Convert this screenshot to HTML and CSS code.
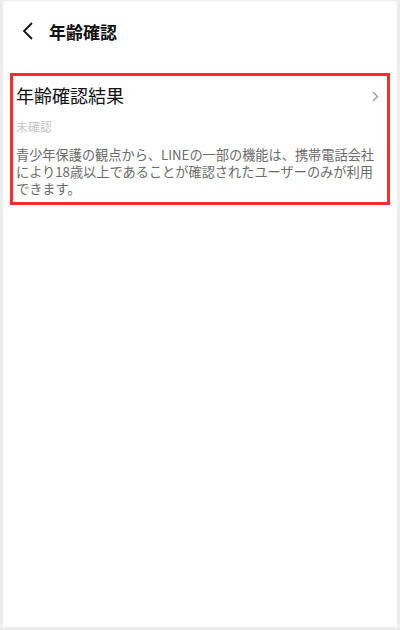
FILE: index.html
```html
<!DOCTYPE html>
<html lang="ja">
<head>
<meta charset="utf-8">
<link rel="stylesheet" href="styles.css">
</head>
<body>
<div class="screen">
  <header class="topbar">
    <svg class="back" width="12" height="20" viewBox="0 0 12 20"><path d="M10 2 L2 10 L10 18" fill="none" stroke="#111" stroke-width="1.8"/></svg>
    <h1 class="title">年齢確認</h1>
  </header>
  <section class="card">
    <div class="card-head">
      <span class="card-title">年齢確認結果</span>
      <svg class="chev" width="7" height="11" viewBox="0 0 7 11"><path d="M1 1 L5.5 5.5 L1 10" fill="none" stroke="#999" stroke-width="1.3"/></svg>
    </div>
    <div class="status">未確認</div>
    <p class="desc">青少年保護の観点から、LINEの一部の機能は、携帯電話会社により18歳以上であることが確認されたユーザーのみが利用できます。</p>
  </section>
</div>
</body>
</html>
```
FILE: styles.css
```css
html, body {
  margin: 0;
  padding: 0;
  background: #ececec;
}
body {
  font-family: "Noto Sans CJK JP", "Noto Sans", sans-serif;
  width: 400px;
  height: 630px;
  overflow: hidden;
}
.screen {
  margin: 1px 3px 0 3px;
  height: 626px;
  background: #fff;
  display: flex;
  flex-direction: column;
}
.topbar {
  height: 62px;
  display: flex;
  align-items: center;
  padding-left: 19px;
  box-sizing: border-box;
}
.back {
  display: block;
  margin-top: -2px;
}
.title {
  margin: -2px 0 0 15px;
  font-size: 17px;
  font-weight: 700;
  color: #111;
  line-height: 1;
}
.card {
  margin: 10px 7px 0 7px;
  border: 3px solid #ff2a2e;
  padding: 6px 8px 0 3px;
  height: 132px;
  box-sizing: border-box;
}
.card-head {
  display: flex;
  align-items: center;
  justify-content: space-between;
  height: 26px;
}
.card-title {
  font-size: 18px;
  color: #111;
  line-height: 26px;
}
.chev {
  display: block;
  margin-top: 3px;
}
.status {
  margin-top: 10px;
  font-size: 12px;
  line-height: 18px;
  color: #c4c4c4;
}
.desc {
  margin: 10px 0 0 0;
  font-size: 13.2px;
  line-height: 17px;
  color: #6b6b6b;
}
```
